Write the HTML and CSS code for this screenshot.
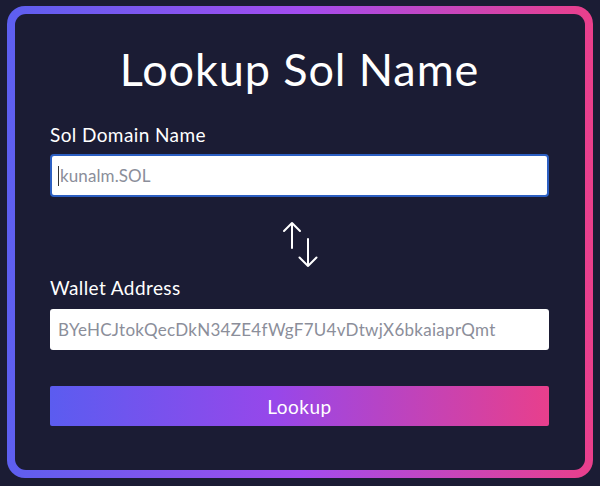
FILE: index.html
```html
<!DOCTYPE html>
<html lang="en">
<head>
<meta charset="utf-8">
<title>Lookup Sol Name</title>
<link rel="stylesheet" href="styles.css">
</head>
<body>
<div class="frame">
  <div class="card">
    <h1 class="title">Lookup Sol Name</h1>
    <label class="label label-domain" for="domain">Sol Domain Name</label>
    <div class="input input-focus"><span class="caret"></span><span class="placeholder">kunalm.SOL</span></div>
    <div class="swap">
      <svg width="40" height="50" viewBox="0 0 40 50" fill="none" stroke="#ffffff" stroke-width="2" stroke-linecap="round" stroke-linejoin="round">
        <path d="M12 29V4M4 12l8-8 8 8"/>
        <path d="M28 20v27M19.5 38.5L28 47l8.5-8.5"/>
      </svg>
    </div>
    <label class="label label-wallet" for="wallet">Wallet Address</label>
    <div class="input input-wallet"><span class="placeholder">BYeHCJtokQecDkN34ZE4fWgF7U4vDtwjX6bkaiaprQmt</span></div>
    <button class="btn" type="button">Lookup</button>
  </div>
</div>
</body>
</html>
```
FILE: styles.css
```css
* { box-sizing: border-box; }
html, body { margin: 0; padding: 0; }
body {
  background: #1b1c34;
  font-family: "Lato", "Noto Sans", sans-serif;
  width: 600px;
  height: 486px;
  overflow: hidden;
}
.frame {
  margin: 6px 7px 0 7px;
  width: 586px;
  height: 472px;
  padding: 8px;
  border-radius: 18px;
  background: linear-gradient(90deg, #5d5ff0 0%, #a24cf0 50%, #ea3f8b 100%);
}
.card {
  width: 100%;
  height: 100%;
  background: #1b1c34;
  border-radius: 11px;
  padding: 28px 36px 0 35px;
  display: flex;
  flex-direction: column;
}
.title {
  margin: 0;
  color: #ffffff;
  font-size: 45px;
  line-height: 54px;
  font-weight: 400;
  text-align: center;
  letter-spacing: 0.9px;
}
.label {
  display: block;
  color: #ffffff;
  font-size: 19px;
  line-height: 22px;
  letter-spacing: 0.4px;
}
.label-domain { margin-top: 28px; }
.label-domain + .input { margin-top: 8px; }
.input {
  height: 41px;
  background: #ffffff;
  border-radius: 3px;
  display: flex;
  align-items: center;
  padding-left: 8px;
  font-size: 17px;
  color: #8b8e9a;
}
.input-focus {
  height: 43px;
  border: 2px solid #2c5fc2;
  border-radius: 4px;
  padding-left: 6px;
}
.caret {
  width: 1px;
  height: 20px;
  background: #333;
  margin-right: 1px;
}
.placeholder { white-space: nowrap; letter-spacing: 0.1px; }
.input-wallet .placeholder { letter-spacing: 0.28px; }
.swap {
  display: flex;
  justify-content: center;
  margin-top: 22px;
  height: 50px;
}
.swap svg { display: block; }
.label-wallet { margin-top: 8px; }
.label-wallet + .input { margin-top: 10px; }
.btn {
  margin-top: 36px;
  height: 40px;
  border: 0;
  border-radius: 2px;
  background: linear-gradient(90deg, #5b5cf0 0%, #9747ea 45%, #e83f8c 100%);
  color: #ffffff;
  font-family: inherit;
  font-size: 19px;
  letter-spacing: 0.5px;
  padding: 0;
}
```
